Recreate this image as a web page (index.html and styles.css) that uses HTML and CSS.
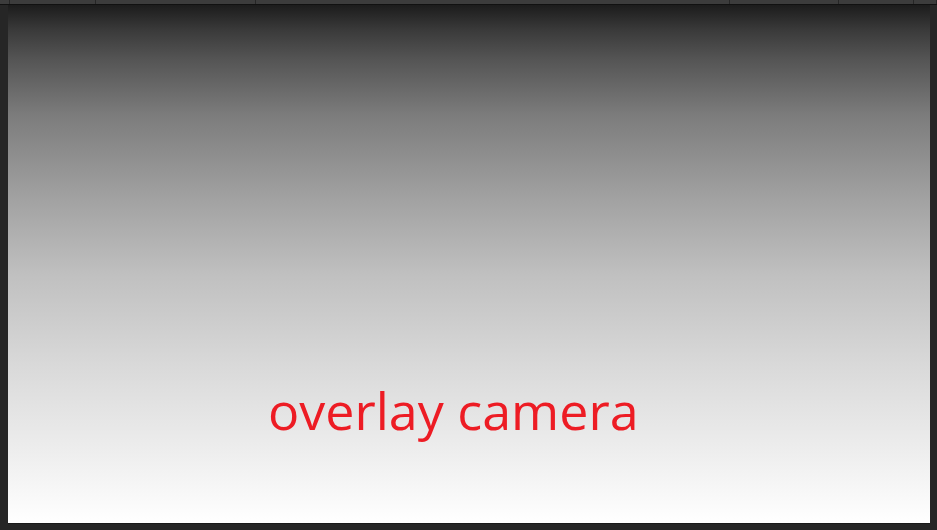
FILE: index.html
```html
<!DOCTYPE html>
<html lang="en">
<head>
    <meta charset="UTF-8">
    <meta name="viewport" content="width=device-width, initial-scale=1.0">
    <title>Overlay Camera</title>
    <link rel="stylesheet" href="styles.css">
</head>
<body>
    <div class="toolbar">
        <div class="tool-cell w-9"></div>
        <div class="tool-cell w-86"></div>
        <div class="tool-cell w-160"></div>
        <div class="tool-cell w-474"></div>
        <div class="tool-cell w-109"></div>
        <div class="tool-cell w-75"></div>
        <div class="tool-cell grow"></div>
    </div>

    <div class="viewport-frame">
        <div class="viewport">
            <div class="overlay-label">overlay camera</div>
        </div>
    </div>
</body>
</html>
```

FILE: styles.css
```css
html, body {
    margin: 0;
    padding: 0;
    height: 100%;
}
body {
    background: #262626;
    font-family: 'Open Sans', 'Noto Sans', sans-serif;
    display: flex;
    flex-direction: column;
    overflow: hidden;
}
.toolbar {
    display: flex;
    height: 4px;
    background: #3c3c3c;
    border-bottom: 1px solid #111;
}
.tool-cell {
    border-right: 1px solid #262626;
    box-sizing: border-box;
}
.w-9 { width: 10px; }
.w-86 { width: 86px; }
.w-160 { width: 160px; }
.w-474 { width: 474px; }
.w-109 { width: 109px; }
.w-75 { width: 75px; }
.grow { flex: 1; }
.viewport-frame {
    flex: 1;
    padding: 0 7px 6px 8px;
    display: flex;
}
.viewport {
    flex: 1;
    display: flex;
    flex-direction: column;
    justify-content: flex-end;
    padding: 0 0 87px 260px;
    border-bottom: 1px solid #1a1a1a;
    background: linear-gradient(to bottom,
        #1c1c1c 0px,
        #3a3a3a 25px,
        #555555 55px,
        #7c7c7c 110px,
        #a0a0a0 190px,
        #c0c0c0 270px,
        #d9d9d9 360px,
        #ececec 440px,
        #ffffff 100%);
}
.overlay-label {
    color: #ed1c24;
    font-size: 52px;
    line-height: 1;
}
```
